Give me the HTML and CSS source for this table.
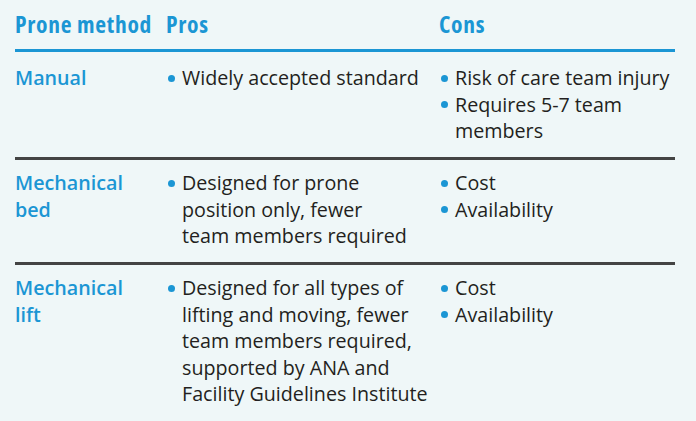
FILE: index.html
```html
<!DOCTYPE html>
<html>
<head>
<meta charset="utf-8">
<link rel="stylesheet" href="styles.css">
</head>
<body>
<table class="grid">
  <colgroup>
    <col class="c-method">
    <col class="c-pros">
    <col class="c-cons">
  </colgroup>
  <thead>
    <tr>
      <th>Prone method</th>
      <th>Pros</th>
      <th>Cons</th>
    </tr>
  </thead>
  <tbody>
    <tr class="first">
      <td class="method">Manual</td>
      <td><ul class="list"><li>Widely accepted standard</li></ul></td>
      <td><ul class="list"><li>Risk of care team injury</li><li>Requires 5-7 team<br>members</li></ul></td>
    </tr>
    <tr>
      <td class="method">Mechanical<br>bed</td>
      <td><ul class="list"><li>Designed for prone<br>position only, fewer<br>team members required</li></ul></td>
      <td><ul class="list"><li>Cost</li><li>Availability</li></ul></td>
    </tr>
    <tr class="last">
      <td class="method">Mechanical<br>lift</td>
      <td><ul class="list"><li>Designed for all types of<br>lifting and moving, fewer<br>team members required,<br>supported by ANA and<br>Facility Guidelines Institute</li></ul></td>
      <td><ul class="list"><li>Cost</li><li>Availability</li></ul></td>
    </tr>
  </tbody>
</table>
</body>
</html>
```

FILE: styles.css
```css
html, body {
  margin: 0;
  padding: 0;
  background: #eff7f8;
}
body {
  padding: 10px 21px 0 15px;
  font-family: "Open Sans", "Liberation Sans", sans-serif;
  color: #231f20;
}
.grid {
  width: 660px;
  border-collapse: collapse;
  table-layout: fixed;
}
.c-method { width: 151px; }
.c-pros { width: 273px; }
.c-cons { width: 236px; }
th {
  text-align: left;
  font-weight: 700;
  font-size: 23.5px;
  font-stretch: 80%;
  color: #1b96d4;
  padding: 1px 0 12px 0;
  border-bottom: 3px solid #1b96d4;
  letter-spacing: 0.7px;
  line-height: 26px;
  white-space: nowrap;
}
td {
  vertical-align: top;
  padding: 10px 0 12.5px 0;
  font-size: 19.7px;
  line-height: 26.5px;
  border-bottom: 3px solid #444;
  white-space: nowrap;
}
tr.first td { padding-top: 13px; }
tr.last td { border-bottom: none; }
.method {
  color: #1b96d4;
  font-weight: 600;
}
.list {
  list-style: none;
  margin: 0;
  padding: 0 0 0 16px;
}
.list li {
  position: relative;
}
.list li::before {
  content: "";
  position: absolute;
  left: -14px;
  top: 9.5px;
  width: 7px;
  height: 7px;
  border-radius: 50%;
  background: #1b96d4;
}
```
